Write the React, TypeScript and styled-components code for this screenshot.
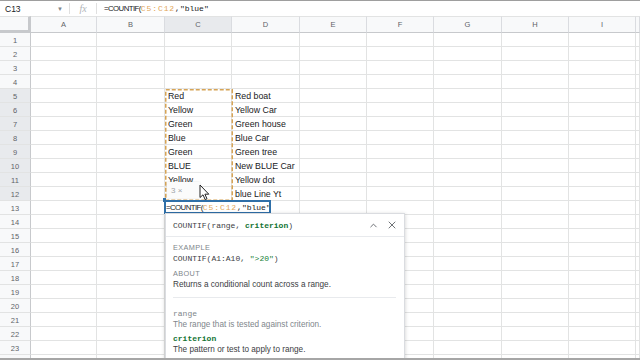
import React from "react"
import styled, { createGlobalStyle } from "styled-components"
import { ChevronUp, X } from "lucide-react"

const SANS = `"Liberation Sans", Arial, sans-serif`
const MONO = `"Liberation Mono", "DejaVu Sans Mono", monospace`

const GlobalStyle = createGlobalStyle`
  html, body { margin: 0; padding: 0; background: #fff; }
  body { font-family: ${SANS}; overflow: hidden; }
`

const Frame = styled.div`
  position: relative;
  width: 640px;
  height: 360px;
  overflow: hidden;
  display: flex;
  flex-direction: column;
  background: #fff;
`

const FormulaBar = styled.div`
  height: 15px;
  border-top: 1px solid #9e9e9e;
  display: flex;
  align-items: center;
  font-size: 8.5px;
  color: #202124;
  flex-shrink: 0;
`

const NameBox = styled.div`
  width: 70px;
  display: flex;
  align-items: center;
  justify-content: space-between;
  padding: 0 6px 0 5px;
  box-sizing: border-box;
  border-right: 1px solid #e0e0e0;
  height: 11px;
`

const Caret = styled.span`
  font-size: 6px;
  color: #80868b;
`

const Fx = styled.div`
  width: 26px;
  height: 11px;
  display: flex;
  align-items: center;
  justify-content: center;
  border-right: 1px solid #e0e0e0;
  font-family: "Liberation Serif", serif;
  font-style: italic;
  font-size: 10px;
  color: #b0b4b8;
`

const FormulaText = styled.div`
  padding-left: 7px;
  white-space: nowrap;
  display: flex;
  align-items: center;
`

const Fn = styled.span`
  font-family: ${SANS};
  font-size: 7.8px;
  letter-spacing: -0.55px;
  color: #202124;
`

const Ref = styled.span`
  font-family: ${MONO};
  font-size: 8px;
  letter-spacing: 0.9px;
  color: #e2a659;
`

const Lit = styled.span`
  font-family: ${MONO};
  font-size: 8px;
  color: #202124;
`

const Sheet = styled.div`
  flex: 1;
  display: grid;
  grid-template-columns: 31px 66px 68px 67px 68px 67px 67px 68px 67px 67px 1fr;
  grid-template-rows: 17px;
  grid-auto-rows: 14px;
  overflow: hidden;
`

const Corner = styled.div`
  background: #f8f9fa;
  border-right: 3px solid #c7c9cc;
  border-bottom: 3px solid #c7c9cc;
  border-top: 1px solid #e2e3e3;
  box-sizing: border-box;
`

const ColHeader = styled.div<{ $active?: boolean }>`
  background: ${(p) => (p.$active ? "#e8eaed" : "#f8f9fa")};
  border-right: 1px solid #dadce0;
  border-bottom: 1px solid #c7c9cc;
  border-top: 1px solid #e2e3e3;
  box-sizing: border-box;
  display: flex;
  align-items: center;
  justify-content: center;
  font-size: 7.5px;
  color: #5f6368;
`

const RowHeader = styled.div<{ $active?: boolean }>`
  background: ${(p) => (p.$active ? "#e8eaed" : "#f8f9fa")};
  border-right: 1px solid #c7c9cc;
  border-bottom: 1px solid #e2e3e3;
  box-sizing: border-box;
  padding-top: 1px;
  display: flex;
  align-items: center;
  justify-content: center;
  font-size: 7.5px;
  color: #5f6368;
`

const Cell = styled.div`
  border-right: 1px solid #e2e3e3;
  border-bottom: 1px solid #e2e3e3;
  box-sizing: border-box;
  font-size: 8.8px;
  line-height: 13px;
  padding: 1px 0 0 3px;
  color: #202124;
  white-space: nowrap;
  overflow: visible;
`

const BottomEdge = styled.div`
  height: 2px;
  background: #a6a6a6;
  flex-shrink: 0;
  position: relative;
  z-index: 5;
`

const RangeBox = styled.svg`
  position: absolute;
  left: 165px;
  top: 89px;
  width: 68px;
  height: 112px;
  pointer-events: none;
`

const Editor = styled.div`
  position: absolute;
  left: 164px;
  top: 200px;
  width: 107px;
  height: 14px;
  box-sizing: border-box;
  border: 2px solid #2f6fa8;
  background: #fff;
  display: flex;
  align-items: center;
  padding-left: 0;
  white-space: nowrap;
  overflow: hidden;
`

const Handle = styled.div`
  position: absolute;
  left: 163px;
  top: 198px;
  width: 3px;
  height: 4px;
  background: #2f6fa8;
`

const CountTip = styled.div`
  position: absolute;
  left: 167px;
  top: 182px;
  width: 33px;
  height: 16px;
  background: #fbfbfb;
  box-shadow: 0 0 2px rgba(0, 0, 0, 0.12);
  font-size: 8px;
  color: #a0a4a8;
  display: flex;
  align-items: center;
  padding-left: 4px;
  box-sizing: border-box;
`

const Cursor = styled.svg`
  position: absolute;
  left: 199px;
  top: 184px;
`

const Popup = styled.div`
  position: absolute;
  left: 165px;
  top: 213px;
  width: 240px;
  height: 160px;
  background: #fff;
  border: 1px solid #dadce0;
  box-shadow: 0 1px 4px rgba(0, 0, 0, 0.2);
  box-sizing: border-box;
`

const PopupHead = styled.div`
  height: 22px;
  border-bottom: 1px solid #e8eaed;
  display: flex;
  align-items: center;
  justify-content: space-between;
  padding: 0 6px 0 7px;
  font-family: ${MONO};
  font-size: 8px;
  color: #3c4043;
`

const HeadIcons = styled.div`
  display: flex;
  align-items: center;
  gap: 7px;
  color: #5f6368;
`

const PopupBody = styled.div`
  padding: 5px 8px 0 7px;
`

const Label = styled.div`
  font-size: 7.3px;
  letter-spacing: 0.4px;
  line-height: 11px;
  color: #80868b;
`

const Code = styled.div<{ $tone?: "dark" | "muted" | "green" }>`
  font-family: ${MONO};
  font-size: 8px;
  line-height: 11px;
  color: ${(p) =>
    p.$tone === "muted" ? "#80868b" : p.$tone === "green" ? "#137333" : "#3c4043"};
  font-weight: ${(p) => (p.$tone === "green" ? 700 : 400)};
`

const Text = styled.div<{ $muted?: boolean }>`
  font-size: 8.2px;
  line-height: 11px;
  color: ${(p) => (p.$muted ? "#80868b" : "#3c4043")};
`

const Group = styled.div<{ $gap?: number }>`
  margin-top: ${(p) => p.$gap ?? 0}px;
`

const Rule = styled.div`
  height: 1px;
  background: #e8eaed;
  margin: 7px 0 10px;
`

const Green = styled.span`
  font-weight: 700;
  color: #137333;
`

const Str = styled.span`
  color: #188038;
`

const COLS = ["A", "B", "C", "D", "E", "F", "G", "H", "I", ""]

const DATA: Record<string, string> = {
  C5: "Red",
  C6: "Yellow",
  C7: "Green",
  C8: "Blue",
  C9: "Green",
  C10: "BLUE",
  C11: "Yellow",
  D5: "Red boat",
  D6: "Yellow Car",
  D7: "Green house",
  D8: "Blue Car",
  D9: "Green tree",
  D10: "New BLUE Car",
  D11: "Yellow dot",
  D12: "blue Line Yt",
}

export default function App() {
  const rows = Array.from({ length: 24 }, (_, i) => i + 1)
  return (
    <Frame>
      <GlobalStyle />
      <FormulaBar>
        <NameBox>
          <span>C13</span>
          <Caret>▼</Caret>
        </NameBox>
        <Fx>fx</Fx>
        <FormulaText>
          <Fn>=COUNTIF(</Fn>
          <Ref>C5:C12</Ref>
          <Lit>,"blue"</Lit>
        </FormulaText>
      </FormulaBar>

      <Sheet>
        <Corner />
        {COLS.map((c, i) => (
          <ColHeader key={i} $active={c === "C"}>
            {c}
          </ColHeader>
        ))}
        {rows.map((r) => (
          <React.Fragment key={r}>
            <RowHeader $active={r >= 5 && r <= 12}>{r}</RowHeader>
            {COLS.map((c, i) => (
              <Cell key={i}>{c ? DATA[c + r] ?? "" : ""}</Cell>
            ))}
          </React.Fragment>
        ))}
      </Sheet>
      <BottomEdge />

      <RangeBox viewBox="0 0 68 112">
        <rect
          x="0.75"
          y="0.75"
          width="66.5"
          height="110.5"
          fill="none"
          stroke="#d6a456"
          strokeWidth="1.5"
          strokeDasharray="4 2"
        />
      </RangeBox>

      <CountTip>3 ×</CountTip>
      <Cursor width="11" height="17" viewBox="0 0 11 17">
        <path
          d="M1 1 L1 13.5 L4 10.8 L6.2 15.6 L8 14.8 L5.9 10.2 L9.8 10.2 Z"
          fill="#fff"
          stroke="#222"
          strokeWidth="1"
          strokeLinejoin="round"
        />
      </Cursor>

      <Handle />
      <Editor>
        <Fn>=COUNTIF(</Fn>
        <Ref>C5:C12</Ref>
        <Lit>,"blue"</Lit>
      </Editor>

      <Popup>
        <PopupHead>
          <span>
            COUNTIF(range, <Green>criterion</Green>)
          </span>
          <HeadIcons>
            <ChevronUp size={11} strokeWidth={2} />
            <X size={12} strokeWidth={1.8} />
          </HeadIcons>
        </PopupHead>
        <PopupBody>
          <Label>EXAMPLE</Label>
          <Code>
            COUNTIF(A1:A10, <Str>"&gt;20"</Str>)
          </Code>
          <Group $gap={4}>
            <Label>ABOUT</Label>
            <Text>Returns a conditional count across a range.</Text>
          </Group>
          <Rule />
          <Code $tone="muted">range</Code>
          <Text $muted>The range that is tested against criterion.</Text>
          <Group $gap={3}>
            <Code $tone="green">criterion</Code>
            <Text>The pattern or test to apply to range.</Text>
          </Group>
        </PopupBody>
      </Popup>
    </Frame>
  )
}
